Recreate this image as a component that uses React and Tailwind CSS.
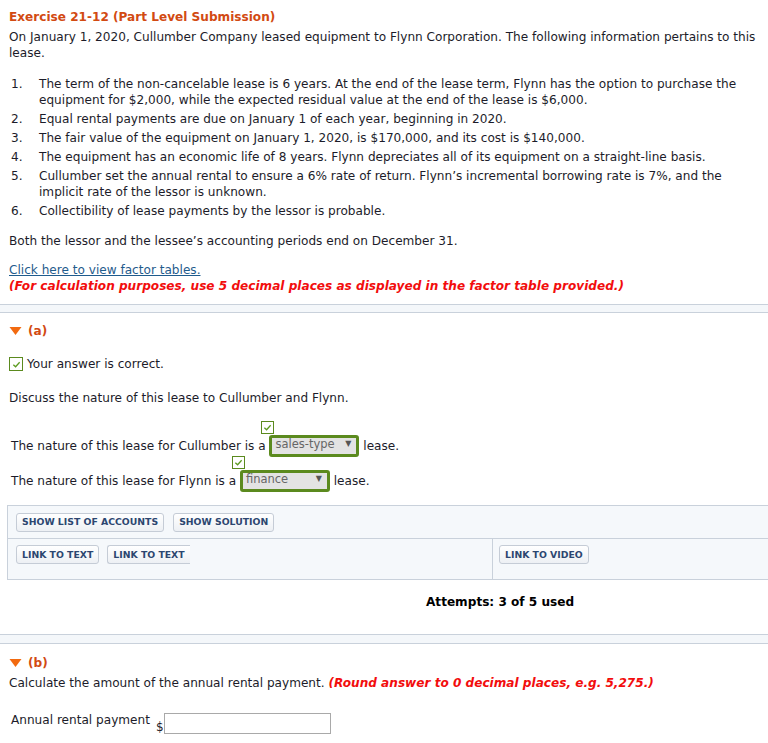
import React from "react";

const items = [
  "The term of the non-cancelable lease is 6 years. At the end of the lease term, Flynn has the option to purchase the equipment for $2,000, while the expected residual value at the end of the lease is $6,000.",
  "Equal rental payments are due on January 1 of each year, beginning in 2020.",
  "The fair value of the equipment on January 1, 2020, is $170,000, and its cost is $140,000.",
  "The equipment has an economic life of 8 years. Flynn depreciates all of its equipment on a straight-line basis.",
  "Cullumber set the annual rental to ensure a 6% rate of return. Flynn\u2019s incremental borrowing rate is 7%, and the implicit rate of the lessor is unknown.",
  "Collectibility of lease payments by the lessor is probable.",
];

function Check({ size = "h-[14px] w-[14px]" }) {
  return (
    <span className={`inline-flex ${size} items-center justify-center border border-[#5b8a1e] bg-white`}>
      <svg viewBox="0 0 10 10" className="h-[9px] w-[9px]">
        <path d="M1.5 5.2 L4 7.5 L8.5 2.5" fill="none" stroke="#5b9a1e" strokeWidth="1.4" />
      </svg>
    </span>
  );
}

function Btn({ children, noRight }) {
  return (
    <span
      className={`inline-flex h-[19px] items-center rounded-[3px] border border-[#c5ccd6] bg-gradient-to-b from-white to-[#edf0f4] px-[5px] text-[9.3px] font-bold text-[#2c4670] ${noRight ? "border-r-0 rounded-r-none" : ""}`}
    >
      {children}
    </span>
  );
}

function Select({ value, width }) {
  return (
    <span className="relative inline-block align-middle">
      <span className="absolute -top-[15px] left-[-8px]">
        <Check size="h-[13px] w-[13px]" />
      </span>
      <span
        className={`inline-flex h-[22px] ${width} items-start justify-between rounded-[3px] border-[3px] border-[#5b8a1e] bg-[#e3e3e3] pl-[3px] pr-[5px] text-[11.5px] leading-[13px] text-[#666]`}
      >
        <span>{value}</span>
        <span className="text-[8px] leading-[12px] text-[#555]">{"\u25BC"}</span>
      </span>
    </span>
  );
}

function Triangle() {
  return (
    <svg viewBox="0 0 12 8" className="mr-[6px] h-[8px] w-[13px]">
      <path d="M0 0 H12 L6 8 Z" fill="#f26a10" />
    </svg>
  );
}

export default function App() {
  return (
    <div
      className="min-h-[743px] bg-white text-[12.1px] leading-[16px] text-[#1c1c2a]"
      style={{ fontFamily: "Verdana, 'DejaVu Sans', sans-serif" }}
    >
      <div className="px-[9px] pt-[9px]">
        <div className="font-bold text-[#d24a12]">Exercise 21-12 (Part Level Submission)</div>
        <p className="mt-[4px]">
          On January 1, 2020, Cullumber Company leased equipment to Flynn Corporation. The following information pertains to this lease.
        </p>
        <ol className="mt-[15px]">
          {items.map((t, i) => (
            <li key={i} className="mb-[3px] flex">
              <span className="w-[30px] shrink-0 pl-[2px]">{i + 1}.</span>
              <span>{t}</span>
            </li>
          ))}
        </ol>
        <p className="mt-[14px]">Both the lessor and the lessee&rsquo;s accounting periods end on December 31.</p>
        <p className="mt-[13px] text-[#1f5b8c] underline">Click here to view factor tables.</p>
        <p className="font-bold italic text-[#f20d0d]">
          (For calculation purposes, use 5 decimal places as displayed in the factor table provided.)
        </p>
      </div>

      <div className="mt-[10px] h-[9px] border-y border-[#c9d1db] bg-[#f4f7fa]" />

      <div className="px-[9px]">
        <div className="mt-[10px] flex items-center font-bold text-[#d24a12]">
          <Triangle />
          (a)
        </div>
        <div className="mt-[17px] flex items-center gap-[4px]">
          <Check />
          <span>Your answer is correct.</span>
        </div>
        <p className="mt-[18px]">Discuss the nature of this lease to Cullumber and Flynn.</p>
        <div className="mt-[29px] flex items-center pl-[2px]">
          <span>The nature of this lease for Cullumber is a&nbsp;</span>
          <Select value="sales-type" width="w-[90px]" />
          <span>&nbsp;lease.</span>
        </div>
        <div className="mt-[13px] flex items-center pl-[2px]">
          <span>The nature of this lease for Flynn is a&nbsp;</span>
          <Select value="finance" width="w-[90px]" />
          <span>&nbsp;lease.</span>
        </div>
      </div>

      <div className="ml-[7px] mt-[13px] border border-r-0 border-[#c9d1db] bg-[#f5f8fb]">
        <div className="flex h-[33px] items-center gap-[9px] border-b border-[#c9d1db] pl-[8px]">
          <Btn>SHOW LIST OF ACCOUNTS</Btn>
          <Btn>SHOW SOLUTION</Btn>
        </div>
        <div className="flex h-[40px]">
          <div className="flex w-[485px] items-start gap-[8px] border-r border-[#c9d1db] pl-[8px] pt-[6px]">
            <Btn>LINK TO TEXT</Btn>
            <Btn noRight>LINK TO TEXT</Btn>
          </div>
          <div className="pl-[6px] pt-[6px]">
            <Btn>LINK TO VIDEO</Btn>
          </div>
        </div>
      </div>

      <div className="mt-[14px] pl-[426px] font-bold text-black">Attempts: 3 of 5 used</div>

      <div className="mt-[24px] h-[10px] border-y border-[#c9d1db] bg-[#f4f7fa]" />

      <div className="px-[9px]">
        <div className="mt-[11px] flex items-center font-bold text-[#d24a12]">
          <Triangle />
          (b)
        </div>
        <p className="mt-[4px]">
          Calculate the amount of the annual rental payment.{" "}
          <span className="font-bold italic text-[#f20d0d]">(Round answer to 0 decimal places, e.g. 5,275.)</span>
        </p>
        <div className="mt-[22px] flex items-start pl-[2px]">
          <span className="mt-[-1px]">Annual rental payment</span>
          <span className="ml-[6px] mt-[8px] text-[12px] leading-[12px]">$</span>
          <span className="h-[21px] w-[167px] border border-[#a9a9a9] bg-white" />
        </div>
      </div>
    </div>
  );
}
